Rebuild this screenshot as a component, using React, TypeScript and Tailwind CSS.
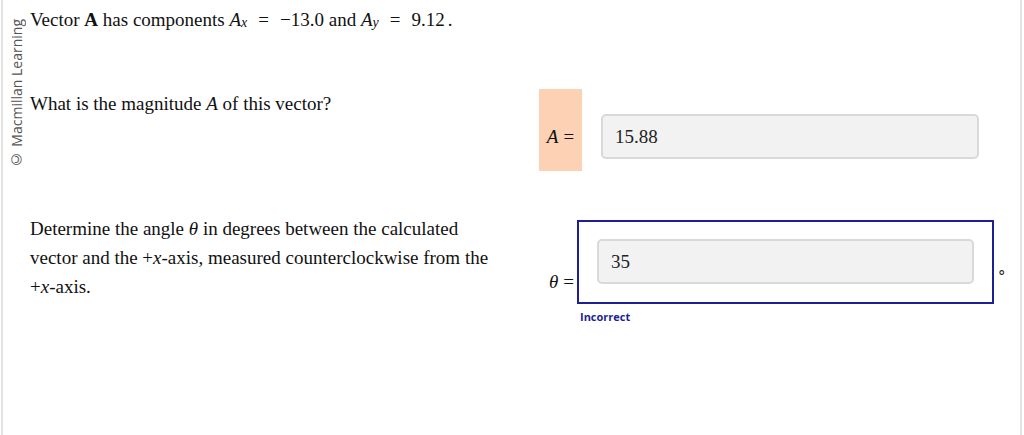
import React from "react";

const serif = { fontFamily: '"Liberation Serif", "Times New Roman", serif' };
const sans = { fontFamily: '"Open Sans", "Noto Sans", sans-serif' };

const Eq = () => <span className="mx-[11px]">=</span>;

const Sub = ({ base, sub }: { base: string; sub: string }) => (
  <span className="italic">
    {base}
    <sub className="relative top-[1px] text-[14px]">{sub}</sub>
  </span>
);

const Field = ({ value, className }: { value: string; className?: string }) => (
  <div
    className={
      "flex h-[45px] items-center rounded-[5px] border-2 border-[#d9d9d9] bg-[#f2f2f2] pl-[12px] text-[19px] text-[#222] " +
      (className ?? "")
    }
    style={serif}
  >
    {value}
  </div>
);

export default function App() {
  return (
    <div className="h-[435px] w-[1024px] bg-white">
      <div className="ml-[1px] flex h-full w-[1021px] border-x-2 border-[#e3e3e3] text-[#111]" style={serif}>
        {/* copyright gutter */}
        <div className="flex w-[27px] shrink-0 items-start justify-center pt-[19px]">
          <span className="rotate-180 text-[14px] leading-none text-[#555] [writing-mode:vertical-rl]" style={sans}>
            © Macmillan Learning
          </span>
        </div>

        <div className="flex flex-1 flex-col text-[19px] leading-[29px]">
          <p className="pt-[5px]">
            Vector <b>A</b> has components <Sub base="A" sub="x" />
            <Eq />
            −13.0 and <Sub base="A" sub="y" />
            <Eq />
            9.12<span className="ml-[3px]">.</span>
          </p>

          {/* question 1 */}
          <div className="mt-[55px] flex">
            <p className="w-[509px] shrink-0">
              What is the magnitude <i>A</i> of this vector?
            </p>
            <div className="flex items-start">
              <div className="flex h-[82px] w-[43px] items-center justify-center whitespace-nowrap bg-[#fdd1b4] pt-[12px]">
                <i>A</i>
                <span className="ml-[5px]">=</span>
              </div>
              <Field value="15.88" className="ml-[19px] mt-[25px] w-[378px]" />
            </div>
          </div>

          {/* question 2 */}
          <div className="mt-[43px] flex">
            <p className="w-[472px] shrink-0">
              Determine the angle <i>θ</i> in degrees between the calculated vector and the +<i>x</i>-axis, measured
              counterclockwise from the +<i>x</i>-axis.
            </p>
            <div className="ml-[37px] flex items-start pt-[6px]">
              <div className="mt-[47px] w-[38px] shrink-0 whitespace-nowrap pr-[3px] text-right">
                <i>θ</i>
                <span className="ml-[5px]">=</span>
              </div>
              <div className="flex flex-col">
                <div className="flex h-[84px] w-[417px] items-center justify-center border-2 border-[#1f1f94] pb-[2px]">
                  <Field value="35" className="w-[377px] items-start pt-[6px]" />
                </div>
                <span className="mt-[5px] pl-[3px] text-[11px] font-bold leading-[16px] text-[#1f1f94]" style={sans}>
                  Incorrect
                </span>
              </div>
              <span className="ml-[3px] mt-[38px] text-[15px]">∘</span>
            </div>
          </div>
        </div>
      </div>
    </div>
  );
}
